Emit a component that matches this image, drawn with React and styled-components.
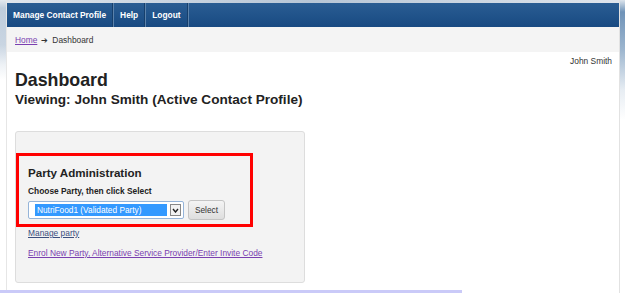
import styled, { createGlobalStyle } from "styled-components";

const Global = createGlobalStyle`
  html, body {
    margin: 0;
    padding: 0;
    background: #fff;
    font-family: "Liberation Sans", Arial, sans-serif;
    overflow: hidden;
  }
`;

const Frame = styled.div`
  display: flex;
  width: 625px;
  height: 293px;
  overflow: hidden;
  position: relative;
`;
const LeftGutter = styled.div`
  width: 6px;
  flex-shrink: 0;
  background: linear-gradient(to bottom, #e4e9ef 0, #bfcddc 8px, #c9d5e2 45px, #eef2f6 65px, #fff 80px);
`;
const RightGutter = styled.div`
  width: 5px;
  flex-shrink: 0;
  background: linear-gradient(to bottom, #dce4ec 0, #6f93b8 12px, #9db6cf 50px, #e7edf3 90px, #fff 120px);
`;
const Main = styled.div`
  flex: 1;
  display: flex;
  flex-direction: column;
  border-left: 1px solid #e6e6e6;
  border-right: 1px solid #e2e2e2;
  & > * {
    flex-shrink: 0;
  }
`;
const TopStrip = styled.div`
  height: 3px;
  background: linear-gradient(to right, #dfe5ec, #b7c6d6 50%, #dfe5ec);
`;
const Nav = styled.nav`
  display: flex;
  height: 24px;
  background: linear-gradient(to bottom, #2a5d93, #184a82);
`;
const NavItem = styled.a`
  display: flex;
  align-items: center;
  padding: 0 7px 0 6px;
  color: #fff;
  font-size: 8.4px;
  font-weight: bold;
  border-right: 1px solid #5b82ab;
  box-shadow: inset -1px 0 0 #163f6c;
`;
const Crumbs = styled.div`
  height: 25px;
  display: flex;
  align-items: center;
  padding-left: 8px;
  background: #f4f4f4;
  font-size: 8.4px;
  color: #333;
  gap: 4px;
`;
const CrumbLink = styled.a`
  color: #7a3fb0;
  text-decoration: underline;
`;
const Content = styled.div`
  padding: 0 7px 0 8px;
`;
const UserName = styled.div`
  text-align: right;
  font-size: 8.4px;
  color: #333;
  margin-top: 4px;
  line-height: 11px;
`;
const Title = styled.h1`
  margin: 2px 0 0;
  font-size: 17.8px;
  line-height: 22px;
  color: #222;
`;
const Subtitle = styled.h2`
  margin: 1px 0 0;
  font-size: 13.6px;
  line-height: 16px;
  color: #222;
`;
const Panel = styled.div`
  margin-top: 23px;
  width: 288px;
  height: 129px;
  background: #f3f3f3;
  border: 1px solid #dddddd;
  border-radius: 3px;
  padding-top: 21px;
`;
const Highlight = styled.div`
  width: 237px;
  height: 74px;
  border: 3px solid #ff0000;
  padding: 10px 0 0 9px;
  box-sizing: border-box;
`;
const PanelTitle = styled.div`
  font-size: 11.6px;
  font-weight: bold;
  color: #222;
  line-height: 14px;
`;
const Label = styled.div`
  font-size: 8.4px;
  font-weight: bold;
  color: #222;
  margin-top: 6px;
  line-height: 10px;
`;
const Row = styled.div`
  display: flex;
  gap: 4px;
  margin-top: 4px;
  align-items: center;
`;
const FakeSelect = styled.div`
  width: 156px;
  height: 18px;
  box-sizing: border-box;
  border: 1px solid #95b4d9;
  border-radius: 2px;
  background: #fff;
  display: flex;
  align-items: center;
  padding: 2px 2px 2px 6px;
  gap: 3px;
`;
const Selected = styled.div`
  flex: 1;
  height: 12px;
  background: #3399ff;
  color: #fff;
  font-size: 8.3px;
  line-height: 12px;
  padding-left: 2px;
`;
const Arrow = styled.div`
  width: 11px;
  height: 12px;
  box-sizing: border-box;
  border: 1px solid #888;
  background: #f2f2f2;
  display: flex;
  align-items: center;
  justify-content: center;
`;
const Button = styled.button`
  height: 20px;
  width: 37px;
  padding: 0;
  font-family: inherit;
  font-size: 8.3px;
  color: #333;
  border: 1px solid #c4c4c4;
  border-radius: 3px;
  background: linear-gradient(to bottom, #f4f4f4, #dedede);
`;
const Links = styled.div`
  padding-left: 12px;
  display: flex;
  flex-direction: column;
  align-items: flex-start;
  gap: 9px;
  margin-top: 1px;
`;
const PanelLink = styled.a`
  font-size: 8.4px;
  text-decoration: underline;
  line-height: 11px;
  color: ${(p) => (p.$visited ? "#7a3fb0" : "#3b4e7e")};
`;
const BottomBar = styled.div`
  position: absolute;
  left: 0;
  bottom: 0;
  width: 462px;
  height: 3px;
  background: #cacaf8;
`;

export default function App() {
  return (
    <Frame>
      <Global />
      <LeftGutter />
      <Main>
        <TopStrip />
        <Nav>
          <NavItem>Manage Contact Profile</NavItem>
          <NavItem>Help</NavItem>
          <NavItem>Logout</NavItem>
        </Nav>
        <Crumbs>
          <CrumbLink>Home</CrumbLink>
          <span>➔</span>
          <span>Dashboard</span>
        </Crumbs>
        <Content>
          <UserName>John Smith</UserName>
          <Title>Dashboard</Title>
          <Subtitle>Viewing: John Smith (Active Contact Profile)</Subtitle>
          <Panel>
            <Highlight>
              <PanelTitle>Party Administration</PanelTitle>
              <Label>Choose Party, then click Select</Label>
              <Row>
                <FakeSelect>
                  <Selected>NutriFood1 (Validated Party)</Selected>
                  <Arrow>
                    <svg width="7" height="5" viewBox="0 0 7 5">
                      <path d="M1 1 L3.5 4 L6 1" stroke="#222" strokeWidth="1.4" fill="none" />
                    </svg>
                  </Arrow>
                </FakeSelect>
                <Button>Select</Button>
              </Row>
            </Highlight>
            <Links>
              <PanelLink>Manage party</PanelLink>
              <PanelLink $visited>Enrol New Party, Alternative Service Provider/Enter Invite Code</PanelLink>
            </Links>
          </Panel>
        </Content>
      </Main>
      <RightGutter />
      <BottomBar />
    </Frame>
  );
}
